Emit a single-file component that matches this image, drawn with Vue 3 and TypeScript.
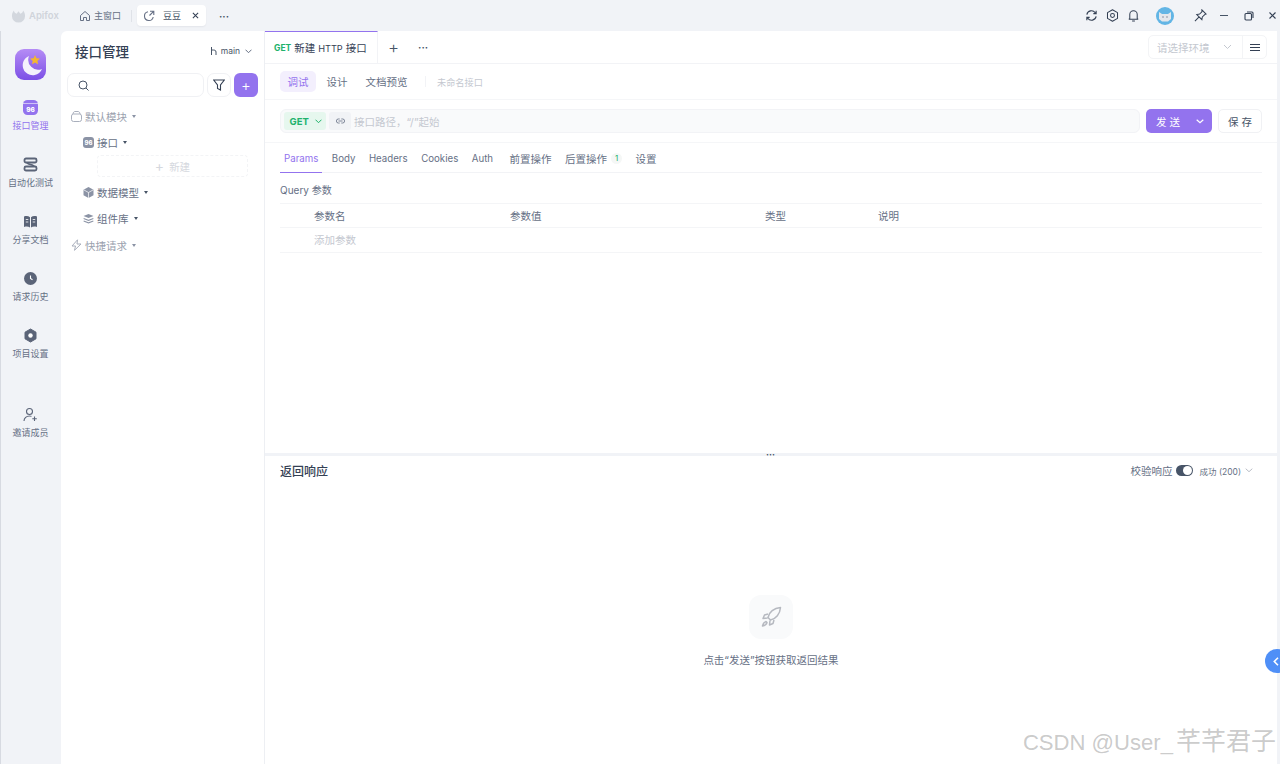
<script setup lang="ts">
interface NavItem {
  label: string
  icon: string
}

const navItems: NavItem[] = [
  { label: '接口管理', icon: 'api' },
  { label: '自动化测试', icon: 'auto' },
  { label: '分享文档', icon: 'book' },
  { label: '请求历史', icon: 'clock' },
  { label: '项目设置', icon: 'gear' },
]

const reqTabs = ['Params', 'Body', 'Headers', 'Cookies', 'Auth', '前置操作', '后置操作', '设置']

function isLatin(tab: string) {
  return /^[A-Za-z]+$/.test(tab)
}
</script>

<template>
  <div class="app">
    <!-- 顶部标题栏 -->
    <header class="titlebar">
      <div class="brand">
        <svg width="15" height="14" viewBox="0 0 16 14"><path d="M3 1C1.500 3 1 5 1 7a7 7 0 0 0 14 0c0-2-.5-4-2-6-.5 2-1.500 3-3 3.500C9 3.500 8.500 2.500 8 2c-.5.500-1 1.500-2 2.500C4.500 4 3.500 3 3 1z" fill="#d3d7de" /></svg>
        <span>Apifox</span>
      </div>
      <div class="home-tab">
        <svg width="12" height="12" viewBox="0 0 12 12" fill="none" stroke="#667085" stroke-width="1"><path d="M1.500 5.500 6 1.500l4.500 4v5h-3v-3h-3v3h-3z" /></svg>
        <span>主窗口</span>
      </div>
      <i class="bar-sep"></i>
      <div class="project-tab">
        <svg width="12" height="12" viewBox="0 0 12 12" fill="none" stroke="#667085" stroke-width="1.100"><path d="M5 1.800A4.400 4.400 0 1 0 10.200 7M7 1.200h3.800V5M10.600 1.400 6.500 5.500" /></svg>
        <span class="project-name">豆豆</span>
        <svg width="7" height="7" viewBox="0 0 8 8" stroke="#344054" stroke-width="1.200"><path d="m1 1 6 6M7 1 1 7" /></svg>
      </div>
      <span class="dots bar-dots">···</span>
      <div class="bar-right">
        <svg width="13" height="13" viewBox="0 0 14 14" fill="none" stroke="#344054" stroke-width="1.200"><path d="M2 6a5 5 0 0 1 9-2l1 1M12 8a5 5 0 0 1-9 2L2 9M12 1.800V5H9M2 12.200V9h3" /></svg>
        <svg width="13" height="13" viewBox="0 0 14 14" fill="none" stroke="#344054" stroke-width="1.100" stroke-linejoin="round"><path d="M7 .8 12.400 3.900v6.200L7 13.200 1.600 10.100V3.900z" /><circle cx="7" cy="7" r="2.100" /></svg>
        <svg width="13" height="13" viewBox="0 0 14 14" fill="none" stroke="#344054" stroke-width="1.100"><path d="M3 10.500V6a4 4 0 0 1 8 0v4.500l1 .5H2zM5.500 13h3" /></svg>
        <svg class="avatar" width="18" height="18" viewBox="0 0 18 18"><circle cx="9" cy="9" r="9" fill="#62b5e5" /><path d="M3 5l3 2h6l3-2v7l-3 2.500H6L3 12z" fill="#e3e7ec" /><path d="M6 10h2M10 10h2" stroke="#8b93a5" /></svg>
        <svg class="pin" width="13" height="13" viewBox="0 0 14 14" fill="none" stroke="#344054" stroke-width="1.100"><path d="m8.500 1 4.500 4.500-1.500.5-2.500 2.500-.5 3L3 6l3-.5L8.500 3zM5.500 8.500 1 13" /></svg>
        <i class="win-min"></i>
        <svg class="win-restore" width="10" height="10" viewBox="0 0 10 10" fill="none" stroke="#344054" stroke-width="1.100"><rect x="1" y="2.500" width="6.500" height="6.500" rx="1" /><path d="M3 1h5a1 1 0 0 1 1 1v5" /></svg>
        <svg class="win-close" width="7" height="7" viewBox="0 0 7 7" stroke="#344054" stroke-width="1.100"><path d="m.5.500 6 6M6.500.5l-6 6" /></svg>
      </div>
    </header>

    <div class="content">
      <!-- 左侧导航 -->
      <aside class="rail">
        <div class="logo">
          <svg width="31" height="31" viewBox="0 0 31 31">
            <defs>
              <linearGradient id="logoBg" x1="0" y1="0" x2="0" y2="1">
                <stop offset="0" stop-color="#b58cf5" />
                <stop offset="1" stop-color="#7c4fe6" />
              </linearGradient>
            </defs>
            <rect width="31" height="31" rx="9" fill="url(#logoBg)" />
            <path d="M14 7a10 10 0 1 0 13 13 10 10 0 0 1-13-13z" fill="#f4f1fc" />
            <path d="m20 6 1.500 3.200 3.500.4-2.600 2.300.7 3.400-3.100-1.700-3 1.700.7-3.400-2.600-2.300 3.500-.4z" fill="#f5b82e" />
          </svg>
        </div>
        <div v-for="(item, i) in navItems" :key="item.label" class="nav-item" :class="{ active: i === 0 }">
          <svg v-if="item.icon === 'api'" width="15" height="15" viewBox="0 0 15 15"><rect width="15" height="15" rx="4.500" fill="#9373ee" /><path d="M0 3.500h15" stroke="#fff" stroke-width=".8" opacity=".7" /><text x="7.500" y="11.500" text-anchor="middle" class="api-glyph">96</text></svg>
          <svg v-else-if="item.icon === 'auto'" width="15" height="15" viewBox="0 0 15 15" fill="none" stroke="#5b6478" stroke-width="1.800"><rect x="1.500" y="1.500" width="12" height="4" rx="1.500" /><rect x="1.500" y="9.500" width="12" height="4" rx="1.500" /><path d="M4 5.500c0 2 7 2 7 4" /></svg>
          <svg v-else-if="item.icon === 'book'" width="15" height="15" viewBox="0 0 15 15"><path d="M1 2.500c2.500-.8 4.500-.5 6 .8V13.500C5.500 12.500 3.500 12.200 1 13zM14 2.500c-2.500-.8-4.500-.5-6 .8V13.500c1.500-1 3.500-1.300 6-.5z" fill="#5b6478" /><path d="M2.800 5.500h2.500M2.800 8h2.500M9.700 5.500h2.500M9.700 8h2.500" stroke="#fff" stroke-width=".8" /></svg>
          <svg v-else-if="item.icon === 'clock'" width="15" height="15" viewBox="0 0 15 15"><circle cx="7.500" cy="7.500" r="6.500" fill="#5b6478" /><path d="M7.500 4.500v3l2 1.300" fill="none" stroke="#fff" stroke-width="1.100" /></svg>
          <svg v-else width="15" height="15" viewBox="0 0 15 15"><path d="M7.500 1 13 4.200v6.600L7.500 14 2 10.800V4.200z" fill="#5b6478" stroke="#5b6478" stroke-linejoin="round" /><circle cx="7.500" cy="7.500" r="2.200" fill="#fff" /></svg>
          <span>{{ item.label }}</span>
        </div>
        <div class="nav-item invite">
          <svg width="15" height="15" viewBox="0 0 15 15" fill="none" stroke="#5b6478" stroke-width="1.100"><circle cx="6.500" cy="4.500" r="3" /><path d="M1 14c0-3 2.500-5 5.500-5 .8 0 1.500.1 2 .4M11.500 9.500v4.500M9.300 11.800h4.500" /></svg>
          <span>邀请成员</span>
        </div>
      </aside>

      <!-- 接口树 -->
      <section class="tree-panel">
        <div class="tree-head">
          <h2>接口管理</h2>
          <div class="branch">
            <svg width="7" height="10" viewBox="0 0 7 10" fill="none" stroke="#475467"><path d="M1.500 1v8M1.500 4c3 0 4.500 0 4.500 2v3" /></svg>
            <span>main</span>
            <svg class="chev" width="7" height="5" viewBox="0 0 7 5" fill="none" stroke="#667085"><path d="m.5.700 3 3 3-3" /></svg>
          </div>
        </div>
        <div class="search-row">
          <div class="search">
            <svg width="11" height="11" viewBox="0 0 11 11" fill="none" stroke="#475467"><circle cx="5" cy="5" r="4" /><path d="m8 8 2.500 2.500" /></svg>
          </div>
          <div class="filter-btn">
            <svg width="12" height="12" viewBox="0 0 12 12" fill="none" stroke="#344054" stroke-width="1.100"><path d="M.7 1h10.600L7.500 6v5l-3-1.500V6z" /></svg>
          </div>
          <div class="add-btn">+</div>
        </div>
        <ul class="tree">
          <li class="tree-item muted">
            <svg width="11" height="11" viewBox="0 0 11 11" fill="none" stroke="#a9afbc"><rect x=".5" y="3" width="10" height="7.500" rx="2" /><path d="M2 3c0-1.500 1-2.500 2-2.500h3c1 0 2 1 2 2.500" /></svg>
            <span>默认模块</span><i class="caret"></i>
          </li>
          <li class="tree-item sub">
            <svg width="11" height="11" viewBox="0 0 11 11"><rect width="11" height="11" rx="3" fill="#8b93a5" /><text x="5.500" y="8" text-anchor="middle" class="tree-glyph">96</text></svg>
            <span>接口</span><i class="caret dark"></i>
          </li>
          <li class="new-row"><span class="new-plus">+</span>新建</li>
          <li class="tree-item sub">
            <svg width="11" height="11" viewBox="0 0 11 11"><path d="M5.500 0 10.500 2.700v5.600L5.500 11 .5 8.300V2.700z" fill="#8b93a5" /><path d="M.8 2.900 5.500 5.500l4.700-2.600M5.500 5.500V11" fill="none" stroke="#fff" stroke-width=".7" /></svg>
            <span>数据模型</span><i class="caret dark"></i>
          </li>
          <li class="tree-item sub">
            <svg width="11" height="11" viewBox="0 0 11 11" fill="#8b93a5"><path d="M5.500 1 10.500 3 5.500 5 .5 3z" /><path d="M.8 5 5.500 6.800 10.200 5l.3 1.100-5 2-5-2zM.8 7.400l4.700 1.800 4.700-1.800.3 1.100-5 2-5-2z" /></svg>
            <span>组件库</span><i class="caret dark"></i>
          </li>
          <li class="tree-item muted">
            <svg width="11" height="12" viewBox="0 0 11 12" fill="none" stroke="#a9afbc"><path d="M6.500.8 1 7h3.500L3.500 11.300 10 5H6z" /></svg>
            <span>快捷请求</span><i class="caret"></i>
          </li>
        </ul>
      </section>

      <main class="main">
        <div class="tabbar">
          <div class="http-tab">
            <b>GET</b>
            <span>新建 <span class="latin">HTTP</span> 接口</span>
          </div>
          <span class="tab-plus">+</span>
          <span class="dots tab-dots">···</span>
          <div class="env">
            <div class="env-select">
              <span>请选择环境</span>
              <svg width="9" height="6" viewBox="0 0 9 6" fill="none" stroke="#c4c8d0"><path d="m1 1 3.500 3.500L8 1" /></svg>
            </div>
            <div class="env-menu"><i></i><i></i><i></i></div>
          </div>
        </div>

        <div class="modebar">
          <span class="mode active">调试</span>
          <span class="mode">设计</span>
          <span class="mode">文档预览</span>
          <i class="mode-sep"></i>
          <span class="api-name">未命名接口</span>
        </div>

        <div class="urlbar">
          <div class="url-input">
            <div class="method">
              <b>GET</b>
              <svg width="7" height="5" viewBox="0 0 7 5" fill="none" stroke="#20b26c"><path d="m.5.700 3 3 3-3" /></svg>
            </div>
            <div class="link-box">
              <svg width="9" height="6" viewBox="0 0 11 7" fill="none" stroke="#667085"><path d="M4.500 1H3a2.500 2.500 0 0 0 0 5h1.500M6.500 1H8a2.500 2.500 0 0 1 0 5H6.500M3 3.500h5" /></svg>
            </div>
            <span class="placeholder">接口路径，“/”起始</span>
          </div>
          <div class="send">
            <span class="send-label">发 送</span>
            <svg width="8" height="5" viewBox="0 0 8 5" fill="none" stroke="#fff" stroke-width="1.200"><path d="m.7.700 3.300 3 3.300-3" /></svg>
          </div>
          <div class="save">保 存</div>
        </div>

        <nav class="reqtabs">
          <span
            v-for="(tab, i) in reqTabs"
            :key="tab"
            class="reqtab"
            :class="{ active: i === 0, latin: isLatin(tab), auth: tab === 'Auth' }"
          >
            {{ tab }}<em v-if="tab === '后置操作'" class="count">1</em>
          </span>
        </nav>

        <div class="params">
          <div class="query-title">Query 参数</div>
          <div class="row head">
            <span class="c1">参数名</span>
            <span class="c2">参数值</span>
            <span class="c3">类型</span>
            <span>说明</span>
          </div>
          <div class="row add">
            <span class="c1">添加参数</span>
          </div>
        </div>

        <div class="splitter"><span class="dots">···</span></div>

        <section class="response">
          <div class="resp-head">
            <h3>返回响应</h3>
            <div class="resp-tools">
              <span class="check-label">校验响应</span>
              <i class="toggle"></i>
              <span class="status">成功 (200)</span>
              <svg width="8" height="5" viewBox="0 0 8 5" fill="none" stroke="#b9bdc6"><path d="m.7.700 3.300 3 3.300-3" /></svg>
            </div>
          </div>
          <div class="empty">
            <div class="rocket">
              <svg width="22" height="22" viewBox="0 0 22 22" fill="none" stroke="#b6b9c0" stroke-width="1.500" stroke-linejoin="round"><path d="M8 11.500C9 6 14 2 20.500 1.500 20 8 16 13 10.500 14zM8 8 4.500 9 3 12.500l4.500-.5M14 14l-1 3.500-3.500 1.500.5-4.500M6 15.500c-2 .5-3 2-3.500 4.500 2.500-.5 4-1.500 4.500-3.500z" /></svg>
            </div>
            <p>点击“发送”按钮获取返回结果</p>
          </div>
        </section>
      </main>
    </div>

    <!-- 悬浮按钮 & 水印 -->
    <div class="float-btn">
      <svg width="6" height="9" viewBox="0 0 6 9" fill="none" stroke="#fff" stroke-width="1.600"><path d="M5 .8 1.300 4.500 5 8.200" /></svg>
    </div>
    <div class="watermark">CSDN @User_<span class="watermark-name">芊芊君子</span></div>
  </div>
</template>

<style>
html,
body {
  margin: 0;
  background: #f1f3f7;
}
</style>

<style scoped>
.app {
  position: relative;
  width: 1280px;
  height: 764px;
  display: flex;
  flex-direction: column;
  overflow: hidden;
  background: #f1f3f7;
  color: #475467;
  font-family: 'Inter', 'Noto Sans CJK SC', sans-serif;
  font-size: 11px;
}

h2,
h3,
p,
ul {
  margin: 0;
  padding: 0;
}

i,
em {
  font-style: normal;
}

.dots {
  font-weight: 700;
  line-height: 1;
}

/* 标题栏 */
.titlebar {
  flex: none;
  height: 31px;
  display: flex;
  align-items: center;
  padding-left: 11px;
}

.brand {
  width: 68px;
  display: flex;
  align-items: center;
  gap: 3px;
  color: #d0d4db;
  font-size: 9.500px;
  font-weight: 600;
}

.home-tab {
  display: flex;
  align-items: center;
  gap: 3px;
  font-size: 9px;
  color: #667085;
}

.bar-sep {
  width: 1px;
  height: 12px;
  margin: 0 5px 0 10px;
  background: #dfe2e8;
}

.project-tab {
  width: 69px;
  height: 21px;
  box-sizing: border-box;
  padding: 0 7px 0 6px;
  display: flex;
  align-items: center;
  background: #fff;
  border-radius: 4px;
  box-shadow: 0 1px 2px rgba(16, 24, 40, 0.06);
  font-size: 9px;
  color: #475467;
}

.project-name {
  flex: 1;
  padding-left: 8px;
}

.bar-dots {
  margin-left: 13px;
  font-size: 10px;
  color: #475467;
}

.bar-right {
  margin-left: auto;
  display: flex;
  align-items: center;
  padding-right: 4.500px;
}

.bar-right > svg {
  margin-right: 8px;
}

.bar-right .avatar {
  margin: 0 0 0 7.500px;
}

.bar-right .pin {
  margin: 0 0 0 20.500px;
}

.win-min {
  width: 8px;
  height: 1.500px;
  margin: 0 16px 0 12.500px;
  background: #475467;
}

.bar-right .win-restore {
  margin-right: 15px;
}

.bar-right .win-close {
  margin-right: 0;
}

.content {
  flex: 1;
  min-height: 0;
  display: flex;
}

/* 左侧导航 */
.rail {
  flex: none;
  width: 61px;
  display: flex;
  flex-direction: column;
  align-items: center;
  border-left: 1px solid #d7dae1;
  box-sizing: border-box;
  padding-right: 1px;
}

.logo {
  height: 31px;
  margin: 18px 0 20px;
}

.nav-item {
  height: 57px;
  display: flex;
  flex-direction: column;
  align-items: center;
  gap: 4px;
  font-size: 9px;
  line-height: 13px;
  color: #667085;
  white-space: nowrap;
}

.nav-item.active {
  color: #9373ee;
}

.nav-item.invite {
  margin-top: 22px;
}

.api-glyph {
  font-family: 'Inter', sans-serif;
  font-size: 6.500px;
  font-weight: 800;
  fill: #fff;
}

.tree-glyph {
  font-family: 'Inter', sans-serif;
  font-size: 6px;
  font-weight: 800;
  fill: #fff;
}

/* 接口树 */
.tree-panel {
  flex: none;
  width: 204px;
  box-sizing: border-box;
  background: #fff;
  border-radius: 6px 0 0 0;
  border-right: 1px solid #edeff3;
  padding: 0 6px;
}

.tree-head {
  height: 42px;
  box-sizing: border-box;
  padding: 0 6px 2px 8px;
  display: flex;
  align-items: center;
  justify-content: space-between;
}

.tree-head h2 {
  font-size: 13.500px;
  font-weight: 500;
  color: #344054;
}

.branch {
  display: flex;
  align-items: center;
  font-size: 8.500px;
  color: #475467;
}

.branch span {
  margin-left: 4px;
}

.branch .chev {
  margin-left: 5px;
}

.search-row {
  display: flex;
  align-items: center;
  gap: 3px;
  height: 24px;
}

.search {
  width: 137px;
  height: 24px;
  box-sizing: border-box;
  padding-left: 10px;
  display: flex;
  align-items: center;
  border: 1px solid #f0f1f4;
  border-radius: 7px;
}

.filter-btn {
  width: 24px;
  height: 24px;
  box-sizing: border-box;
  display: flex;
  align-items: center;
  justify-content: center;
  border: 1px solid #f0f1f4;
  border-radius: 7px;
}

.add-btn {
  width: 24px;
  height: 24px;
  display: flex;
  align-items: center;
  justify-content: center;
  border-radius: 6px;
  background: #9373ee;
  color: #fff;
  font-size: 15px;
  font-weight: 300;
}

.tree {
  list-style: none;
  margin-top: 6px;
  font-size: 10.500px;
}

.tree-item {
  height: 26.500px;
  display: flex;
  align-items: center;
  gap: 3px;
  padding-left: 4px;
  color: #667085;
}

.tree-item.muted {
  color: #9aa1ae;
}

.tree-item.sub {
  padding-left: 16px;
}

.caret {
  width: 0;
  height: 0;
  margin-left: 2px;
  border-left: 2px solid transparent;
  border-right: 2px solid transparent;
  border-top: 3px solid #8b93a5;
}

.caret.dark {
  border-top-color: #475467;
}

.new-row {
  height: 22px;
  margin: -1px 10px 2px 30px;
  display: flex;
  align-items: center;
  justify-content: center;
  gap: 5px;
  border: 1px dashed #f3f4f6;
  border-radius: 4px;
  color: #d5d8de;
  box-sizing: border-box;
}

.new-plus {
  font-size: 14px;
  line-height: 1;
}

/* 主区域 */
.main {
  flex: none;
  width: 1012px;
  display: flex;
  flex-direction: column;
  background: #fff;
}

.tabbar {
  flex: none;
  height: 33px;
  box-sizing: border-box;
  display: flex;
  align-items: center;
  border-bottom: 1px solid #f2f3f6;
}

.http-tab {
  width: 113px;
  height: 33px;
  box-sizing: border-box;
  display: flex;
  align-items: center;
  gap: 3px;
  padding-left: 9px;
  border-top: 1.500px solid #9373ee;
  border-right: 1px solid #f2f3f6;
  font-size: 10.500px;
  color: #344054;
  white-space: nowrap;
}

.http-tab b {
  color: #20b26c;
  font-size: 8.500px;
  font-weight: 700;
}

.http-tab .latin {
  font-size: 9.200px;
}

.tab-plus {
  margin-left: 10px;
  font-size: 17px;
  font-weight: 300;
  color: #475467;
}

.tab-dots {
  margin-left: 19px;
  font-size: 10px;
}

.env {
  margin-left: auto;
  margin-right: 10px;
  display: flex;
  height: 24px;
  box-sizing: border-box;
  border: 1px solid #f3f4f6;
  border-radius: 5px;
}

.env-select {
  width: 94px;
  box-sizing: border-box;
  padding: 0 10px 0 8px;
  display: flex;
  align-items: center;
  justify-content: space-between;
  color: #c4c8d0;
  font-size: 10.500px;
  border-right: 1px solid #f3f4f6;
}

.env-menu {
  width: 23px;
  display: flex;
  flex-direction: column;
  align-items: center;
  justify-content: center;
  gap: 2px;
}

.env-menu i {
  width: 10px;
  height: 1px;
  background: #344054;
}

.modebar {
  flex: none;
  height: 36px;
  box-sizing: border-box;
  display: flex;
  align-items: center;
  padding-left: 15px;
  border-bottom: 1px solid #f5f6f8;
  font-size: 10.500px;
}

.mode {
  height: 21px;
  padding: 0 7.500px;
  margin-right: 3px;
  display: flex;
  align-items: center;
  border-radius: 5px;
  color: #667085;
}

.mode.active {
  background: #f3effd;
  color: #9373ee;
}

.mode-sep {
  width: 1px;
  height: 11px;
  margin: 0 11px 0 7px;
  background: #f2f3f6;
}

.api-name {
  font-size: 9.200px;
  color: #c4c8d0;
}

.urlbar {
  flex: none;
  height: 43px;
  box-sizing: border-box;
  display: flex;
  align-items: center;
  padding: 0 15px;
  border-bottom: 1px solid #f5f6f8;
}

.url-input {
  flex: 1;
  height: 24px;
  box-sizing: border-box;
  display: flex;
  align-items: center;
  padding-left: 3px;
  background: #f9fafb;
  border: 1px solid #f2f3f6;
  border-radius: 6px;
}

.method {
  width: 42px;
  height: 18px;
  box-sizing: border-box;
  padding: 0 4px 0 5.500px;
  display: flex;
  align-items: center;
  justify-content: space-between;
  background: #e6f7ee;
  border-radius: 3px;
  color: #20b26c;
  font-size: 9.500px;
}

.link-box {
  width: 22px;
  height: 18px;
  margin-left: 3px;
  display: flex;
  align-items: center;
  justify-content: center;
  background: #f1f3f6;
  border-radius: 3px;
}

.placeholder {
  margin-left: 3px;
  font-size: 10.500px;
  color: #c4c8d0;
}

.send {
  width: 66px;
  height: 24px;
  margin-left: 6px;
  box-sizing: border-box;
  padding: 0 8px 0 10px;
  display: flex;
  align-items: center;
  justify-content: space-between;
  background: #9373ee;
  border-radius: 5px;
  color: #fff;
  font-size: 10.500px;
}

.save {
  width: 44px;
  height: 24px;
  margin-left: 6px;
  box-sizing: border-box;
  display: flex;
  align-items: center;
  justify-content: center;
  border: 1px solid #f0f1f4;
  border-radius: 5px;
  color: #475467;
  font-size: 10.500px;
}

.reqtabs {
  flex: none;
  height: 30px;
  box-sizing: border-box;
  display: flex;
  margin: 0 15px;
  gap: 13.500px;
  border-bottom: 1px solid #f2f3f6;
  font-size: 10.500px;
  color: #667085;
}

.reqtab {
  display: flex;
  align-items: center;
  height: 30px;
  box-sizing: border-box;
  white-space: nowrap;
  color: #667085;
}

.reqtab.latin {
  font-size: 9.700px;
}

.reqtab.auth {
  margin-right: 3px;
}

.reqtab.active {
  padding: 0 4px;
  margin-right: -4px;
  color: #9373ee;
  box-shadow: inset 0 -1px 0 #9373ee;
}

.count {
  width: 11px;
  height: 11px;
  margin-left: 4px;
  display: flex;
  align-items: center;
  justify-content: center;
  border-radius: 50%;
  background: #f5f7f6;
  color: #20b26c;
  font-size: 8px;
}

.params {
  flex: 1;
  min-height: 0;
  padding: 0 15px;
  font-size: 10.500px;
}

.query-title {
  height: 30.500px;
  box-sizing: border-box;
  padding-top: 3px;
  display: flex;
  align-items: center;
  border-bottom: 1px solid #f4f5f7;
  color: #667085;
  font-size: 10px;
}

.row {
  height: 24.500px;
  box-sizing: border-box;
  display: flex;
  align-items: center;
  border-bottom: 1px solid #f4f5f7;
  color: #667085;
}

.row .c1 {
  margin-left: 34px;
  width: 196px;
}

.row .c2 {
  width: 255px;
}

.row .c3 {
  width: 113px;
}

.row.add {
  color: #c4c8d0;
}

.splitter {
  flex: none;
  height: 3px;
  position: relative;
  background: #f1f3f7;
}

.splitter .dots {
  position: absolute;
  left: 501px;
  top: -3px;
  font-size: 9px;
  color: #475467;
}

.response {
  flex: none;
  height: 308px;
  display: flex;
  flex-direction: column;
}

.resp-head {
  height: 29px;
  flex: none;
  display: flex;
  align-items: center;
  justify-content: space-between;
  padding: 0 24px 0 15px;
}

.resp-head h3 {
  font-size: 12px;
  font-weight: 500;
  color: #344054;
}

.resp-tools {
  display: flex;
  align-items: center;
}

.check-label {
  font-size: 10.500px;
  color: #667085;
}

.toggle {
  position: relative;
  width: 17px;
  height: 11px;
  margin: 0 7px 0 3px;
  border-radius: 6px;
  background: #475467;
}

.toggle::after {
  content: '';
  position: absolute;
  right: 1px;
  top: 1px;
  width: 9px;
  height: 9px;
  border-radius: 50%;
  background: #fff;
}

.status {
  margin-right: 4px;
  font-size: 8.500px;
  color: #667085;
}

.empty {
  margin-top: 110px;
  display: flex;
  flex-direction: column;
  align-items: center;
}

.rocket {
  width: 44px;
  height: 44px;
  display: flex;
  align-items: center;
  justify-content: center;
  border-radius: 12px;
  background: #f9fafb;
}

.empty p {
  margin-top: 15px;
  font-size: 10.500px;
  line-height: 14px;
  color: #667085;
}

/* 悬浮在内容之上 */
.float-btn {
  position: absolute;
  left: 1265px;
  top: 649px;
  width: 24px;
  height: 24px;
  padding-left: 8px;
  box-sizing: border-box;
  display: flex;
  align-items: center;
  border-radius: 50%;
  background: #4f8ff7;
}

.watermark {
  position: absolute;
  right: 4px;
  top: 726px;
  font-family: 'Liberation Sans', 'Noto Sans CJK SC', sans-serif;
  font-size: 22.100px;
  line-height: 30px;
  color: rgba(120, 120, 120, 0.4);
  white-space: nowrap;
  pointer-events: none;
}

.watermark-name {
  margin-left: 3px;
  font-size: 25px;
}
</style>
